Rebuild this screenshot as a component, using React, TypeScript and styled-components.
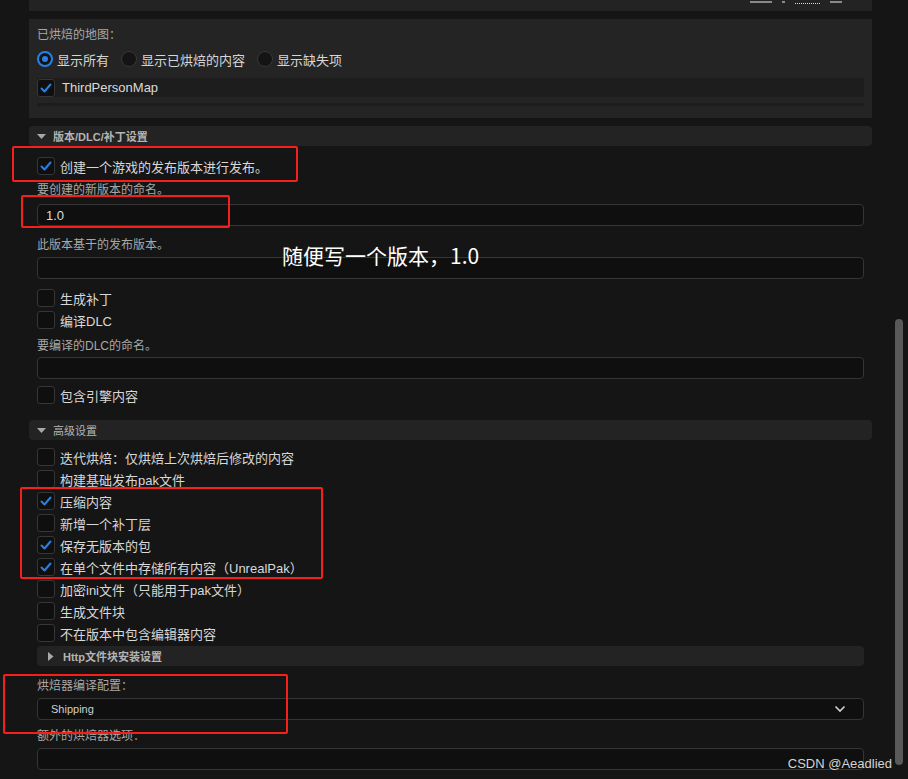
import React from 'react';
import styled, { createGlobalStyle } from 'styled-components';

const Global = createGlobalStyle`
  html, body {
    margin: 0;
    height: 100%;
    overflow: hidden;
    background: #151515;
  }
  body {
    font-family: "Liberation Sans", "Noto Sans CJK SC", sans-serif;
    color: #d6d6d6;
  }
`;

const BLUE = '#2680e6';

const Page = styled.div`
  position: relative;
  display: flex;
  height: 779px;
  overflow: hidden;
`;

const Main = styled.div`
  width: 843px;
  margin-left: 29px;
  display: flex;
  flex-direction: column;
`;

/* the bar above is scrolled away: only the feet of its controls peek out */
const TopStrip = styled.div`
  height: 11px;
  background: #232323;
  display: flex;
  justify-content: flex-end;
  align-items: flex-start;
  gap: 10px;
  padding-right: 30px;
`;

const StripStub = styled.span<{ $w: number; $dotted?: boolean }>`
  width: ${(p) => p.$w}px;
  height: 2px;
  margin-top: 1px;
  background: ${(p) => (p.$dotted ? 'transparent' : '#8a8a8a')};
  border-bottom: ${(p) => (p.$dotted ? '1px dotted #d8d8d8' : 'none')};
`;

const MapsPanel = styled.div`
  margin-top: 8px;
  height: 99px;
  box-sizing: border-box;
  background: #242424;
  padding: 8px 8px 0;
  display: flex;
  flex-direction: column;
`;

const FieldLabel = styled.div<{ $mt?: number }>`
  margin-top: ${(p) => p.$mt ?? 0}px;
  height: 16px;
  line-height: 16px;
  font-size: 12px;
  color: #a8a8a8;
  white-space: nowrap;
`;

const RadioRow = styled.div`
  margin-top: 8px;
  height: 16px;
  display: flex;
  align-items: center;
  gap: 12px;
`;

const RadioOption = styled.label`
  display: flex;
  align-items: center;
  gap: 4px;
  font-size: 13px;
  color: #d6d6d6;
`;

const RadioDot = styled.span<{ $on?: boolean }>`
  width: 16px;
  height: 16px;
  box-sizing: border-box;
  border-radius: 50%;
  background: #141414;
  border: ${(p) => (p.$on ? `2px solid ${BLUE}` : '1px solid #383838')};
  display: flex;
  align-items: center;
  justify-content: center;
  &::after {
    content: '';
    display: ${(p) => (p.$on ? 'block' : 'none')};
    width: 6px;
    height: 6px;
    border-radius: 50%;
    background: ${BLUE};
  }
`;

const MapListRow = styled.div`
  margin-top: 11px;
  height: 19px;
  background: #1d1d1d;
  display: flex;
  align-items: center;
  gap: 7px;
  font-size: 13px;
  color: #dadada;
`;

const MapListScroll = styled.div`
  margin-top: 6px;
  height: 3px;
  background: #1c1c1c;
`;

const CategoryHeader = styled.div<{ $mt: number; $bold?: boolean; $inset?: boolean }>`
  margin-top: ${(p) => p.$mt}px;
  height: 20px;
  border-radius: 4px;
  background: #232323;
  display: flex;
  align-items: center;
  gap: ${(p) => (p.$inset ? 8 : 7)}px;
  padding-left: ${(p) => (p.$inset ? 9 : 8)}px;
  font-size: 11px;
  font-weight: ${(p) => (p.$bold ? 700 : 400)};
  color: #b4b4b4;
`;

const Body = styled.div`
  padding: 0 8px;
  display: flex;
  flex-direction: column;
`;

const CheckRow = styled.label<{ $mt: number }>`
  margin-top: ${(p) => p.$mt}px;
  height: 18px;
  display: flex;
  align-items: center;
  gap: 5px;
  font-size: 13px;
  color: #d8d8d8;
  white-space: nowrap;
`;

const Box = styled.span`
  width: 18px;
  height: 18px;
  flex: none;
  box-sizing: border-box;
  border: 1px solid #363636;
  border-radius: 3px;
  background: #0f0f0f;
  display: flex;
  align-items: center;
  justify-content: center;
`;

const TextBox = styled.div<{ $mt: number }>`
  margin-top: ${(p) => p.$mt}px;
  height: 22px;
  box-sizing: border-box;
  border: 1px solid #353535;
  border-radius: 4px;
  background: #0f0f0f;
  display: flex;
  align-items: center;
  padding-left: 8px;
  font-size: 13px;
  color: #dcdcdc;
`;

const Dropdown = styled(TextBox)`
  justify-content: space-between;
  padding-left: 13px;
  padding-right: 17px;
  font-size: 11px;
  color: #cfcfcf;
`;

const ScrollTrack = styled.div`
  margin-left: 23px;
  padding-top: 319px;
  width: 8px;
`;

const Thumb = styled.div`
  width: 8px;
  height: 446px;
  border-radius: 4px;
  background: #595959;
`;

const RedBox = styled.div`
  position: absolute;
  border: 2px solid #f5201c;
  border-radius: 2px;
  box-sizing: border-box;
  pointer-events: none;
`;

const Note = styled.div`
  position: absolute;
  left: 282px;
  top: 241px;
  font-family: "Noto Sans CJK SC", sans-serif;
  font-size: 21px;
  line-height: 28px;
  color: #ffffff;
  white-space: nowrap;
`;

const Watermark = styled.div`
  position: absolute;
  right: 16px;
  bottom: 8px;
  font-size: 13px;
  color: #d4d4d4;
  white-space: nowrap;
`;

const Check = () => (
  <svg width="14" height="14" viewBox="0 0 14 14">
    <polyline points="2.5,7.5 5.5,10.5 11.5,3.5" fill="none" stroke={BLUE} strokeWidth="2" strokeLinecap="round" strokeLinejoin="round" />
  </svg>
);

const Tri = ({ dir }: { dir: 'down' | 'right' }) => (
  <svg width="9" height="9" viewBox="0 0 9 9">
    {dir === 'down' ? <polygon points="0,2 9,2 4.5,7" fill="#a8a8a8" /> : <polygon points="2,0 7.5,4.5 2,9" fill="#a8a8a8" />}
  </svg>
);

const CheckItem = ({ mt, on, children }: { mt: number; on?: boolean; children: React.ReactNode }) => (
  <CheckRow $mt={mt}>
    <Box>{on && <Check />}</Box>
    {children}
  </CheckRow>
);

const advanced: [string, boolean][] = [
  ['迭代烘焙：仅烘焙上次烘焙后修改的内容', false],
  ['构建基础发布pak文件', false],
  ['压缩内容', true],
  ['新增一个补丁层', false],
  ['保存无版本的包', true],
  ['在单个文件中存储所有内容（UnrealPak）', true],
  ['加密ini文件（只能用于pak文件）', false],
  ['生成文件块', false],
  ['不在版本中包含编辑器内容', false],
];

export default function App() {
  return (
    <>
      <Global />
      <Page>
        <Main>
          <TopStrip>
            <StripStub $w={22} />
            <StripStub $w={3} />
            <StripStub $w={25} $dotted />
            <StripStub $w={12} />
          </TopStrip>

          <MapsPanel>
            <FieldLabel>已烘焙的地图：</FieldLabel>
            <RadioRow>
              <RadioOption><RadioDot $on />显示所有</RadioOption>
              <RadioOption><RadioDot />显示已烘焙的内容</RadioOption>
              <RadioOption><RadioDot />显示缺失项</RadioOption>
            </RadioRow>
            <MapListRow>
              <Box><Check /></Box>
              ThirdPersonMap
            </MapListRow>
            <MapListScroll />
          </MapsPanel>

          <CategoryHeader $mt={8} $bold>
            <Tri dir="down" />
            版本/DLC/补丁设置
          </CategoryHeader>
          <Body>
            <CheckItem mt={11} on>创建一个游戏的发布版本进行发布。</CheckItem>
            <FieldLabel $mt={7}>要创建的新版本的命名。</FieldLabel>
            <TextBox $mt={6}>1.0</TextBox>
            <FieldLabel $mt={11}>此版本基于的发布版本。</FieldLabel>
            <TextBox $mt={4} />
            <CheckItem mt={10}>生成补丁</CheckItem>
            <CheckItem mt={4}>编译DLC</CheckItem>
            <FieldLabel $mt={9}>要编译的DLC的命名。</FieldLabel>
            <TextBox $mt={3} />
            <CheckItem mt={7}>包含引擎内容</CheckItem>
          </Body>

          <CategoryHeader $mt={16}>
            <Tri dir="down" />
            高级设置
          </CategoryHeader>
          <Body>
            {advanced.map(([text, on], i) => (
              <CheckItem key={text} mt={i === 0 ? 8 : 4} on={on}>{text}</CheckItem>
            ))}
            <CategoryHeader $mt={4} $bold $inset>
              <Tri dir="right" />
              Http文件块安装设置
            </CategoryHeader>
            <FieldLabel $mt={12}>烘焙器编译配置：</FieldLabel>
            <Dropdown $mt={4}>
              Shipping
              <svg width="12" height="8" viewBox="0 0 12 8">
                <polyline points="1.5,1.5 6,6 10.5,1.5" fill="none" stroke="#d0d0d0" strokeWidth="1.6" />
              </svg>
            </Dropdown>
            <FieldLabel $mt={8}>额外的烘焙器选项：</FieldLabel>
            <TextBox $mt={4} />
          </Body>
        </Main>

        <ScrollTrack>
          <Thumb />
        </ScrollTrack>

        <RedBox style={{ left: 12, top: 146, width: 286, height: 36 }} />
        <RedBox style={{ left: 21, top: 195, width: 209, height: 33 }} />
        <RedBox style={{ left: 20, top: 487, width: 303, height: 92 }} />
        <RedBox style={{ left: 3, top: 674, width: 285, height: 60 }} />
        <Note>随便写一个版本，1.0</Note>
        <Watermark>CSDN @Aeadlied</Watermark>
      </Page>
    </>
  );
}
